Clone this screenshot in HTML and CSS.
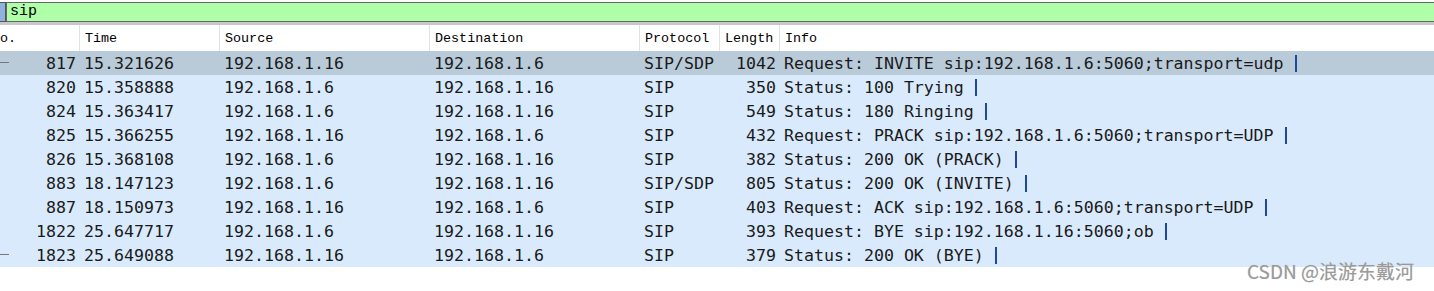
FILE: index.html
```html
<!DOCTYPE html>
<html lang="en">
<head>
<meta charset="UTF-8" />
<title>sip</title>
<link rel="stylesheet" href="styles.css">
</head>
<body>
  <div class="filter">
    <span class="filter-icon"></span>
    <div class="filter-input">sip</div>
  </div>

  <div class="packets">
    <div class="row head">
      <div class="c no">o.</div>
      <div class="c">Time</div>
      <div class="c">Source</div>
      <div class="c">Destination</div>
      <div class="c">Protocol</div>
      <div class="c">Length</div>
      <div class="c">Info</div>
    </div>

    <div class="row sel rel">
      <div class="c no">817</div><div class="c">15.321626</div><div class="c">192.168.1.16</div><div class="c">192.168.1.6</div><div class="c">SIP/SDP</div><div class="c len">1042</div><div class="c info">Request: INVITE sip:192.168.1.6:5060;transport=udp<span class="bar"></span></div>
    </div>
    <div class="row">
      <div class="c no">820</div><div class="c">15.358888</div><div class="c">192.168.1.6</div><div class="c">192.168.1.16</div><div class="c">SIP</div><div class="c len">350</div><div class="c info">Status: 100 Trying<span class="bar"></span></div>
    </div>
    <div class="row">
      <div class="c no">824</div><div class="c">15.363417</div><div class="c">192.168.1.6</div><div class="c">192.168.1.16</div><div class="c">SIP</div><div class="c len">549</div><div class="c info">Status: 180 Ringing<span class="bar"></span></div>
    </div>
    <div class="row">
      <div class="c no">825</div><div class="c">15.366255</div><div class="c">192.168.1.16</div><div class="c">192.168.1.6</div><div class="c">SIP</div><div class="c len">432</div><div class="c info">Request: PRACK sip:192.168.1.6:5060;transport=UDP<span class="bar"></span></div>
    </div>
    <div class="row">
      <div class="c no">826</div><div class="c">15.368108</div><div class="c">192.168.1.6</div><div class="c">192.168.1.16</div><div class="c">SIP</div><div class="c len">382</div><div class="c info">Status: 200 OK (PRACK)<span class="bar"></span></div>
    </div>
    <div class="row">
      <div class="c no">883</div><div class="c">18.147123</div><div class="c">192.168.1.6</div><div class="c">192.168.1.16</div><div class="c">SIP/SDP</div><div class="c len">805</div><div class="c info">Status: 200 OK (INVITE)<span class="bar"></span></div>
    </div>
    <div class="row">
      <div class="c no">887</div><div class="c">18.150973</div><div class="c">192.168.1.16</div><div class="c">192.168.1.6</div><div class="c">SIP</div><div class="c len">403</div><div class="c info">Request: ACK sip:192.168.1.6:5060;transport=UDP<span class="bar"></span></div>
    </div>
    <div class="row">
      <div class="c no">1822</div><div class="c">25.647717</div><div class="c">192.168.1.6</div><div class="c">192.168.1.16</div><div class="c">SIP</div><div class="c len">393</div><div class="c info">Request: BYE sip:192.168.1.16:5060;ob<span class="bar"></span></div>
    </div>
    <div class="row rel">
      <div class="c no">1823</div><div class="c">25.649088</div><div class="c">192.168.1.16</div><div class="c">192.168.1.6</div><div class="c">SIP</div><div class="c len">379</div><div class="c info">Status: 200 OK (BYE)<span class="bar"></span></div>
    </div>
  </div>

  <div class="mark">CSDN @浪游东戴河</div>
</body>
</html>
```

FILE: styles.css
```css
* {
  box-sizing: border-box;
}
body {
  margin: 0;
  background: #fff;
  width: 1434px;
  height: 291px;
  overflow: hidden;
  position: relative;
}

/* barra de filtro */
.filter {
  display: flex;
  height: 25px;
  padding-top: 2px;
  background: #fff;
  border-bottom: 3px solid #c8c8cc;
}
.filter-icon {
  width: 6px;
  height: 20px;
  background: #8fb2de;
  border: 1px solid #555;
  border-left: none;
}
.filter-input {
  flex: 1;
  height: 20px;
  background: #afffa9;
  border-top: 1px solid #666;
  border-bottom: 1px solid #666;
  border-left: 1px solid #666;
  font-family: "Liberation Mono", monospace;
  font-size: 15px;
  line-height: 18px;
  padding-left: 3px;
  color: #000;
}

/* lista de paquetes */
.row {
  display: grid;
  grid-template-columns: 80px 140px 210px 210px 80px 60px 1fr;
  height: 24px;
  align-items: center;
  background: #d9eafc;
  font-family: "DejaVu Sans Mono", monospace;
  font-size: 16.6px;
  color: #1a1a1a;
  position: relative;
}
.row .c {
  padding-left: 4px;
  white-space: nowrap;
  overflow: hidden;
}
.row .no, .row .len {
  text-align: right;
  padding-right: 4px;
  padding-left: 0;
}
.row.head {
  height: 26px;
  background: #fff;
  font-family: "Liberation Mono", monospace;
  font-size: 13.4px;
  color: #000;
  align-items: stretch;
}
.row.head .c {
  display: flex;
  align-items: center;
  border-right: 1px solid #e2e2e2;
  padding-left: 5px;
}
.row.head .no {
  padding-left: 0;
}
.row.head .c:last-child {
  border-right: none;
}
.row.sel {
  background: #b9cad9;
}
.row.rel::before {
  content: "";
  position: absolute;
  left: 0;
  top: 11px;
  width: 9px;
  height: 1px;
  background: #777;
}

.bar {
  display: inline-block;
  width: 2px;
  height: 17px;
  margin-left: 11px;
  vertical-align: -3px;
  background: #1d4a9a;
}

/* marca de agua */
.mark {
  position: absolute;
  left: 1247px;
  top: 257px;
  font-family: "Noto Sans CJK SC", "Noto Sans", sans-serif;
  font-size: 19px;
  color: #9a9a9a;
  text-shadow: 0 0 1px #d0d0d0;
}
```
